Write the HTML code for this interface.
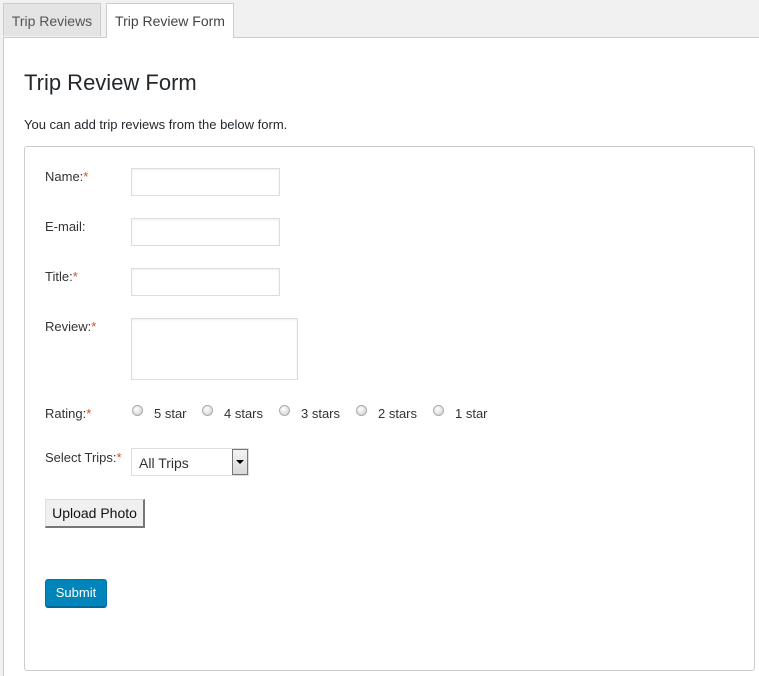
<!DOCTYPE html>
<html><head><meta charset="utf-8"><style>
body{margin:0;width:759px;height:676px;background:#f1f1f1;font-family:"Liberation Sans",sans-serif;color:#444;position:relative;overflow:hidden}
.a{position:absolute}
.tab{position:absolute;top:3px;height:33px;border:1px solid #ccc;border-bottom:none;font-size:14px;line-height:34px;padding:0;text-align:center;white-space:nowrap;box-sizing:border-box}
.panel{position:absolute;left:3px;top:37px;right:0;bottom:0;background:#fff;border-left:1px solid #ccc;border-top:1px solid #ccc}
.box{position:absolute;left:24px;top:146px;width:731px;height:525px;border:1px solid #ccc;border-radius:3px;background:#fff;box-sizing:border-box}
.lbl{position:absolute;left:45px;font-size:13px;color:#333;white-space:nowrap}
.lbl i{font-style:normal;color:#d54e21}
.inp{position:absolute;left:131px;width:149px;height:28px;border:1px solid #ddd;box-sizing:border-box;box-shadow:inset 0 1px 2px rgba(0,0,0,.07);background:#fff}
.rad{position:absolute;top:405px;width:11px;height:11px;border-radius:50%;border:1px solid #aaa;background:radial-gradient(circle at 40% 35%,#fff,#ccc);box-sizing:border-box}
.rt{position:absolute;top:406px;font-size:13px;color:#333;white-space:nowrap}
</style></head><body>
<div class="panel"></div>
<div class="tab" style="left:3px;width:98px;background:#e4e4e4;color:#555">Trip Reviews</div>
<div class="tab" style="left:106px;width:128px;background:#fff;height:35px;color:#444">Trip Review Form</div>
<div class="a" style="left:24px;top:70px;font-size:22px;color:#23282d;white-space:nowrap">Trip Review Form</div>
<div class="a" style="left:24px;top:117px;font-size:13px;color:#23282d;white-space:nowrap">You can add trip reviews from the below form.</div>
<div class="box"></div>
<div class="lbl" style="top:169px">Name:<i>*</i></div>
<div class="inp" style="top:168px"></div>
<div class="lbl" style="top:219px">E-mail:</div>
<div class="inp" style="top:218px"></div>
<div class="lbl" style="top:269px">Title:<i>*</i></div>
<div class="inp" style="top:268px"></div>
<div class="lbl" style="top:319px">Review:<i>*</i></div>
<div class="inp" style="top:318px;width:167px;height:62px"></div>
<div class="lbl" style="top:406px">Rating:<i>*</i></div>
<div class="rad" style="left:132px"></div><div class="rt" style="left:154px">5 star</div>
<div class="rad" style="left:202px"></div><div class="rt" style="left:224px">4 stars</div>
<div class="rad" style="left:279px"></div><div class="rt" style="left:301px">3 stars</div>
<div class="rad" style="left:356px"></div><div class="rt" style="left:378px">2 stars</div>
<div class="rad" style="left:433px"></div><div class="rt" style="left:455px">1 star</div>
<div class="lbl" style="top:450px">Select Trips:<i>*</i></div>
<div class="a" style="left:131px;top:448px;width:118px;height:28px;border:1px solid #ddd;box-sizing:border-box;font-size:14px;color:#333;line-height:28px;padding-left:7px">All Trips
<div class="a" style="right:0px;top:0px;width:16px;height:26px;border:1px solid #777;box-sizing:border-box;background:linear-gradient(#f4f4f4,#d8d8d8)"><div class="a" style="left:3px;top:10px;border-left:4px solid transparent;border-right:4px solid transparent;border-top:4px solid #000"></div></div></div>
<div class="a" style="left:45px;top:499px;width:100px;height:29px;box-sizing:border-box;background:#f0f0f0;border:1px solid #ddd;border-right:2px solid #777;border-bottom:2px solid #777;font-size:14px;color:#111;line-height:27px;text-align:center;white-space:nowrap">Upload Photo</div>
<div class="a" style="left:45px;top:579px;width:62px;height:29px;box-sizing:border-box;background:#0085ba;border:1px solid #0073aa;border-bottom:2px solid #006799;border-radius:3px;color:#fff;font-size:13px;line-height:26px;text-align:center">Submit</div>
</body></html>
